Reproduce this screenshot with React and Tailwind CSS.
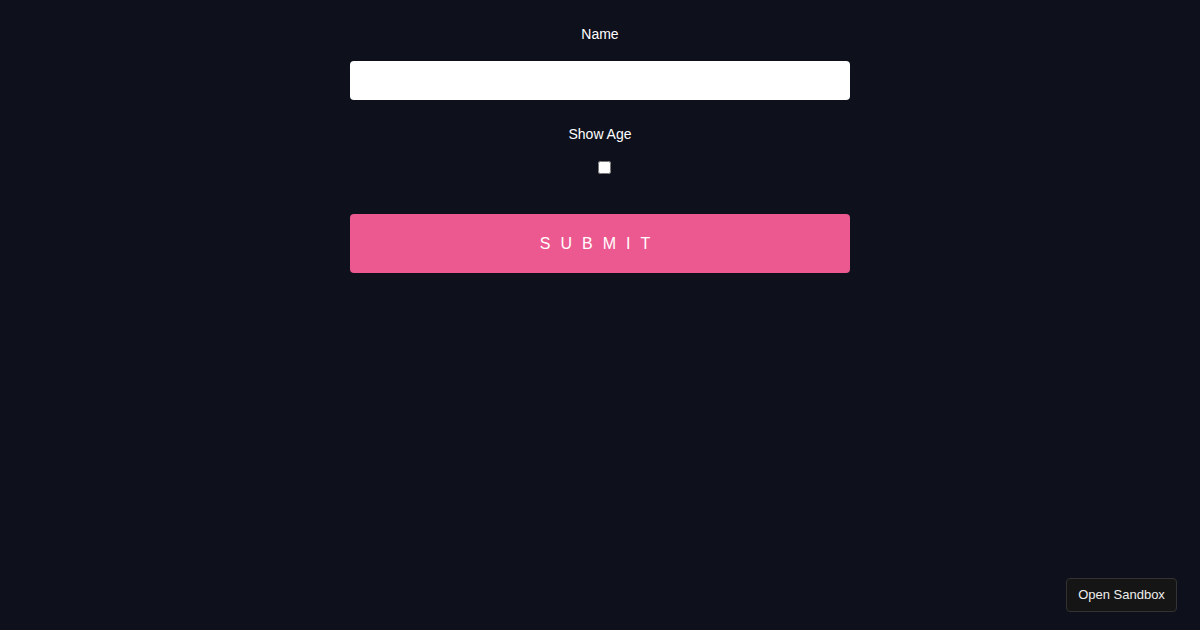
import React, { useState } from "react";

const App = () => {
  const [name, setName] = useState("");
  const [showAge, setShowAge] = useState(false);

  const onSubmit = (e) => {
    e.preventDefault();
  };

  return (
    <div
      className="min-h-screen bg-[#0e101c] text-white"
      style={{ fontFamily: '"Liberation Sans", Arial, sans-serif' }}
    >
      <form onSubmit={onSubmit} className="mx-auto flex max-w-[500px] flex-col">
        <label className="mt-5 mb-[13px] block text-center text-sm leading-[28px] font-light">
          Name
        </label>
        <input
          value={name}
          onChange={(e) => setName(e.target.value)}
          className="h-[39px] w-full rounded bg-white px-[15px] text-sm text-black outline-none"
        />

        <label className="mt-5 mb-[13px] block text-center text-sm leading-[28px] font-light">
          Show Age
        </label>
        <div className="flex h-[13px] justify-center pl-[9px]">
          <input
            type="checkbox"
            checked={showAge}
            onChange={(e) => setShowAge(e.target.checked)}
            className="m-0 h-[13px] w-[13px]"
          />
        </div>

        <button
          type="submit"
          className="mt-10 h-[59px] w-full rounded bg-[#ec5990] text-base tracking-[10px] text-white uppercase"
        >
          Submit
        </button>
      </form>

      <button className="fixed right-[23px] bottom-[18px] h-[34px] w-[111px] rounded border border-[#333] bg-[#151515] text-[13px] text-[#eee]">
        Open Sandbox
      </button>
    </div>
  );
};

export default App;
